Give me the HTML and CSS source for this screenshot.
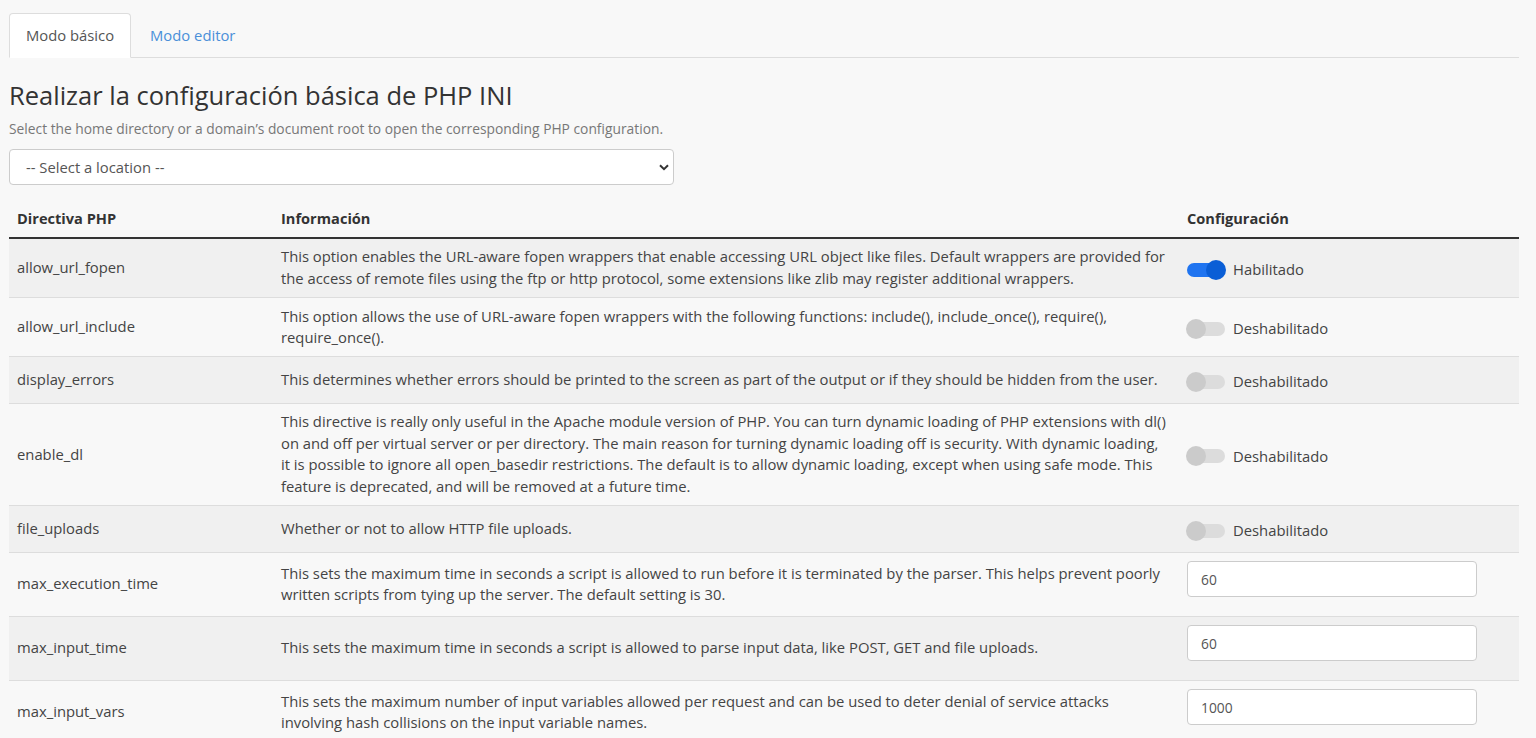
FILE: index.html
```html
<!DOCTYPE html>
<html lang="es">
<head>
<meta charset="UTF-8">
<meta name="viewport" content="width=device-width, initial-scale=1.0">
<title>PHP INI</title>
<link rel="stylesheet" href="styles.css">
</head>
<body>

<div class="page">
  <ul class="tabs">
    <li class="tab active">Modo básico</li>
    <li class="tab">Modo editor</li>
  </ul>

  <h1 class="title">Realizar la configuración básica de PHP INI</h1>
  <p class="subtitle">Select the home directory or a domain’s document root to open the corresponding PHP configuration.</p>

  <div class="select-wrap">
    <select class="location-select">
      <option>-- Select a location --</option>
    </select>
    <svg class="chevron" width="10" height="7" viewBox="0 0 10 7"><path d="M1 1.2 L5 5.2 L9 1.2" fill="none" stroke="#333" stroke-width="2"/></svg>
  </div>

  <table class="ini-table">
    <thead>
      <tr>
        <th class="col-name">Directiva PHP</th>
        <th class="col-info">Información</th>
        <th class="col-conf">Configuración</th>
      </tr>
    </thead>
    <tbody>
      <tr>
        <td>allow_url_fopen</td>
        <td>This option enables the URL-aware fopen wrappers that enable accessing URL object like files. Default wrappers are provided for the access of remote files using the ftp or http protocol, some extensions like zlib may register additional wrappers.</td>
        <td><div class="switch-wrap"><span class="switch on"></span>Habilitado</div></td>
      </tr>
      <tr>
        <td>allow_url_include</td>
        <td>This option allows the use of URL-aware fopen wrappers with the following functions: include(), include_once(), require(), require_once().</td>
        <td><div class="switch-wrap"><span class="switch"></span>Deshabilitado</div></td>
      </tr>
      <tr>
        <td>display_errors</td>
        <td>This determines whether errors should be printed to the screen as part of the output or if they should be hidden from the user.</td>
        <td><div class="switch-wrap"><span class="switch"></span>Deshabilitado</div></td>
      </tr>
      <tr>
        <td>enable_dl</td>
        <td>This directive is really only useful in the Apache module version of PHP. You can turn dynamic loading of PHP extensions with dl() on and off per virtual server or per directory. The main reason for turning dynamic loading off is security. With dynamic loading, it is possible to ignore all open_basedir restrictions. The default is to allow dynamic loading, except when using safe mode. This feature is deprecated, and will be removed at a future time.</td>
        <td><div class="switch-wrap"><span class="switch"></span>Deshabilitado</div></td>
      </tr>
      <tr>
        <td>file_uploads</td>
        <td>Whether or not to allow HTTP file uploads.</td>
        <td><div class="switch-wrap"><span class="switch"></span>Deshabilitado</div></td>
      </tr>
      <tr>
        <td>max_execution_time</td>
        <td>This sets the maximum time in seconds a script is allowed to run before it is terminated by the parser. This helps prevent poorly written scripts from tying up the server. The default setting is 30.</td>
        <td><input class="value-input" type="text" value="60"></td>
      </tr>
      <tr>
        <td>max_input_time</td>
        <td>This sets the maximum time in seconds a script is allowed to parse input data, like POST, GET and file uploads.</td>
        <td><input class="value-input" type="text" value="60"></td>
      </tr>
      <tr>
        <td>max_input_vars</td>
        <td>This sets the maximum number of input variables allowed per request and can be used to deter denial of service attacks involving hash collisions on the input variable names.</td>
        <td><input class="value-input" type="text" value="1000"></td>
      </tr>
    </tbody>
  </table>
</div>

</body>
</html>
```

FILE: styles.css
```css
* {
  margin: 0;
  padding: 0;
  box-sizing: border-box;
}

body {
  background: #f8f8f8;
  color: #444;
  font-family: 'Open Sans', sans-serif;
  font-size: 14.8px;
  line-height: 21.6px;
}

.page {
  padding: 13px 17px 0 9px;
}

.tabs {
  list-style: none;
  display: flex;
  border-bottom: 1px solid #ddd;
}

.tab {
  padding: 11px 16px 12px 16px;
  margin-right: 2px;
  margin-bottom: -1px;
  border: 1px solid transparent;
  border-radius: 4px 4px 0 0;
  color: #4a8fd8;
  line-height: 20px;
}

.tab.active {
  background: #fff;
  border-color: #ddd;
  border-bottom-color: #fff;
  color: #555;
}

.title {
  font-size: 25.5px;
  font-weight: 400;
  color: #333;
  line-height: 1.2;
  margin-top: 22px;
}

.subtitle {
  font-size: 13.8px;
  line-height: 20.7px;
  color: #777;
  margin-top: 8px;
}

.select-wrap {
  position: relative;
  width: 665px;
  margin-top: 10px;
}

.location-select {
  width: 100%;
  height: 36px;
  padding: 0 16px;
  border: 1px solid #ccc;
  border-radius: 4px;
  background: #fff;
  color: #555;
  font-family: 'Open Sans', sans-serif;
  font-size: 14.8px;
  appearance: none;
  -webkit-appearance: none;
}

.chevron {
  position: absolute;
  right: 5px;
  top: 15px;
  pointer-events: none;
}

.ini-table {
  width: 100%;
  border-collapse: collapse;
  margin-top: 16px;
}

.ini-table th {
  text-align: left;
  font-weight: 700;
  font-size: 14.6px;
  color: #333;
  padding: 7px 8px;
  border-bottom: 2px solid #333;
}

.col-name {
  width: 264px;
}

.col-info {
  width: 906px;
}

.ini-table td {
  padding: 7.5px 8px;
  border-top: 1px solid #ddd;
  vertical-align: middle;
}

.ini-table tbody tr:nth-child(odd) {
  background: #f0f0f0;
}

.switch-wrap {
  display: flex;
  align-items: center;
  gap: 8px;
  height: 30.5px;
  padding-top: 4px;
}

.switch {
  position: relative;
  width: 38px;
  height: 14px;
  border-radius: 7px;
  background: #dcdcdc;
  flex-shrink: 0;
}

.switch::after {
  content: '';
  position: absolute;
  left: -1px;
  top: -3px;
  width: 20px;
  height: 20px;
  border-radius: 50%;
  background: #cbcbcb;
}

.switch.on {
  background: #1f74f0;
}

.switch.on::after {
  left: auto;
  right: -1px;
  background: #0a5ed6;
}

.value-input {
  display: block;
  width: 290px;
  height: 36px;
  margin-top: 1px;
  margin-bottom: 11px;
  padding: 0 13px;
  border: 1px solid #ccc;
  border-radius: 4px;
  background: #fff;
  color: #555;
  font-family: 'Open Sans', sans-serif;
  font-size: 13.8px;
}
```
